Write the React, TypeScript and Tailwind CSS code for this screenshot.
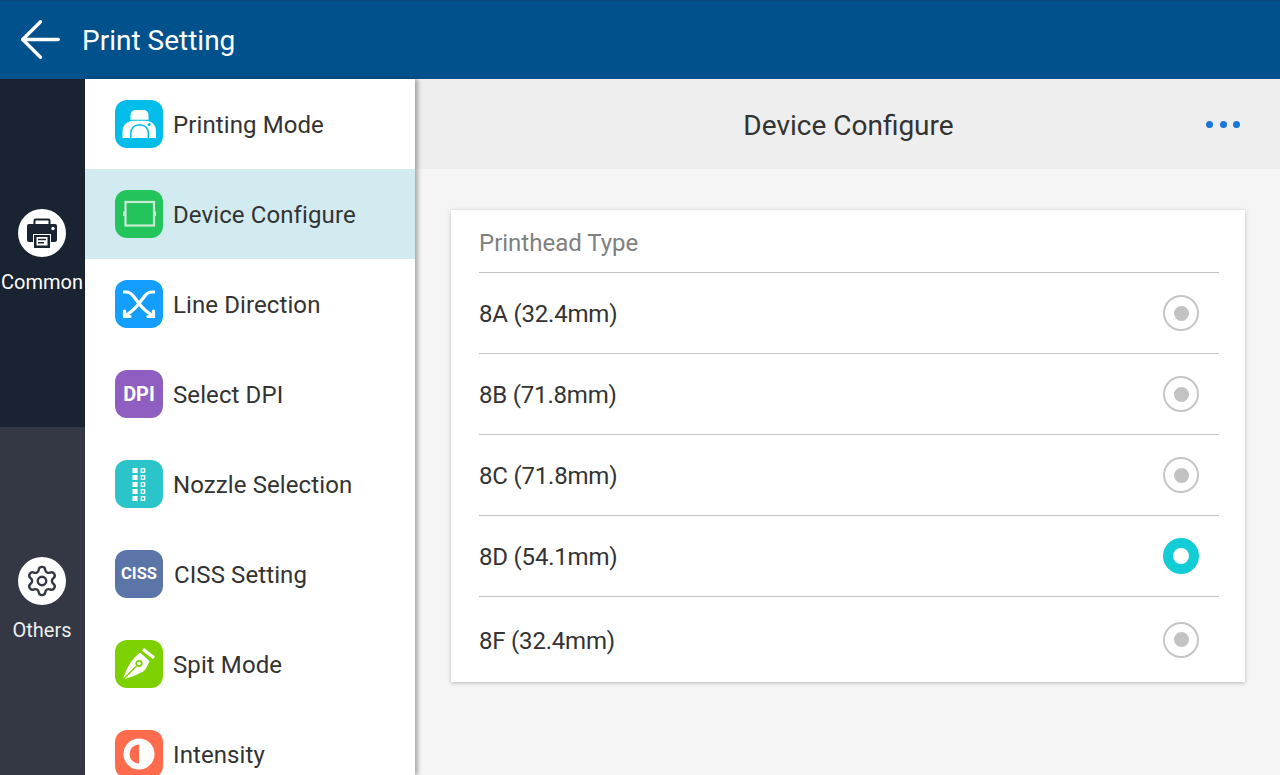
import { ArrowLeft, Settings } from "lucide-react";
import type { ReactNode } from "react";

function IconBox({ bg, children }: { bg: string; children: ReactNode }) {
  return (
    <div className={`flex h-12 w-12 shrink-0 items-center justify-center overflow-hidden rounded-xl ${bg}`}>
      {children}
    </div>
  );
}

function ModeIcon() {
  return (
    <svg width="48" height="48" viewBox="0 0 48 48" fill="none">
      <path d="M15.500 19.800v-4.800a5 5 0 0 1 5-5h8a5 5 0 0 1 5 5v4.800z" fill="#fff" />
      <path d="M7.500 38v-7c0-6 5.500-10.200 11-10.200h12c6 0 10.500 4.200 10.500 10.200v7z" fill="#fff" />
      <path d="M15.800 38v-5c0-4.500 3.500-8 7.500-8h2.500c4.200 0 7.500 3.500 7.500 8v5" stroke="#02bdea" strokeWidth="1.500" />
      <circle cx="34.200" cy="24.500" r="1.500" fill="#02bdea" />
    </svg>
  );
}

function ConfigureIcon() {
  return (
    <svg width="48" height="48" viewBox="0 0 48 48" fill="none">
      <rect x="10.500" y="12" width="28.500" height="23.500" stroke="#c8ecd6" strokeWidth="2.200" />
      <rect x="8" y="21.500" width="2" height="4.500" fill="#c8ecd6" />
      <rect x="39" y="21.500" width="2" height="4.500" fill="#c8ecd6" />
    </svg>
  );
}

function LineIcon() {
  return (
    <svg width="48" height="48" viewBox="0 0 48 48" fill="none" stroke="#fff" strokeWidth="3.200">
      <path d="M8 12h3c4 0 6 2 8 5l5 6.500c3 4 6 7.500 13.500 12" />
      <path d="M40 12h-3c-4 0-6 2-8 5l-5 6.500c-3 4-6 7.500-13.500 12" />
      <path d="M9.500 31v5.500h5.500" strokeLinecap="round" />
      <path d="M38.500 31v5.500H33" strokeLinecap="round" />
    </svg>
  );
}

function NozzleIcon() {
  const rows = [8, 15, 22, 29, 36];
  return (
    <svg width="48" height="48" viewBox="0 0 48 48" fill="none">
      {rows.map((y) => (
        <g key={y}>
          <rect x="17.500" y={y} width="5" height="5" fill="#fff" />
          <rect x="26.300" y={y + 0.800} width="3.400" height="3.400" stroke="#fff" strokeWidth="1.300" />
        </g>
      ))}
    </svg>
  );
}

function SpitIcon() {
  return (
    <svg width="48" height="48" viewBox="0 0 48 48" fill="none">
      <path d="M29 8l11 8.500-2 2.600-11-8.500z" fill="#fff" />
      <path d="M25 12.500L34.500 21C33 25 31 29 29 31 22 35 14 38 8 39.500 10 33 13 26 16 22 18 19 22 15 25 12.500z" fill="#fff" />
      <circle cx="24" cy="23.500" r="3.600" fill="#7ed100" />
      <circle cx="24" cy="23.500" r="1.800" fill="#fff" />
      <path d="M21.500 26L8 39.500" stroke="#7ed100" strokeWidth="1.500" />
    </svg>
  );
}

function IntensityIcon() {
  return (
    <svg width="48" height="48" viewBox="0 0 48 48" fill="none">
      <circle cx="24" cy="24" r="15.500" fill="#fff" />
      <path d="M24 14.500v19a9.500 9.500 0 0 1 0-19z" fill="#ff6b4d" />
    </svg>
  );
}

const menu = [
  { label: "Printing Mode", bg: "bg-[#02bdea]", icon: <ModeIcon /> },
  { label: "Device Configure", bg: "bg-[#23c45b]", icon: <ConfigureIcon />, active: true },
  { label: "Line Direction", bg: "bg-[#149eff]", icon: <LineIcon /> },
  {
    label: "Select DPI",
    bg: "bg-[#8e5fc0]",
    icon: <span className="text-[20px] font-bold text-white">DPI</span>,
  },
  { label: "Nozzle Selection", bg: "bg-[#2cc4cb]", icon: <NozzleIcon /> },
  {
    label: "CISS Setting",
    bg: "bg-[#5b75a8]",
    icon: <span className="text-[16.500px] font-bold text-white">CISS</span>,
    nudge: true,
  },
  { label: "Spit Mode", bg: "bg-[#7ed100]", icon: <SpitIcon /> },
  { label: "Intensity", bg: "bg-[#ff6b4d]", icon: <IntensityIcon /> },
];

const heads = [
  { label: "8A (32.4mm)" },
  { label: "8B (71.8mm)" },
  { label: "8C (71.8mm)" },
  { label: "8D (54.1mm)", selected: true },
  { label: "8F (32.4mm)", last: true },
];

function Radio({ selected }: { selected?: boolean }) {
  if (selected) {
    return (
      <div className="flex h-9 w-9 items-center justify-center rounded-full bg-[#12ccd6]">
        <div className="h-4 w-4 rounded-full bg-white" />
      </div>
    );
  }
  return (
    <div className="flex h-9 w-9 items-center justify-center rounded-full border-2 border-[#c6c6c6]">
      <div className="h-[15px] w-[15px] rounded-full bg-[#c2c2c2]" />
    </div>
  );
}

function PrinterGlyph() {
  return (
    <svg width="32" height="32" viewBox="0 0 32 32" fill="none">
      <path d="M8.500 8V3.500a1 1 0 0 1 1-1h13a1 1 0 0 1 1 1V8" stroke="#1a2331" strokeWidth="2" />
      <path d="M3 7h26a2 2 0 0 1 2 2v14a2 2 0 0 1-2 2h-4v-8H7v8H3a2 2 0 0 1-2-2V9a2 2 0 0 1 2-2z" fill="#1a2331" />
      <circle cx="27" cy="11.500" r="1.700" fill="#fff" />
      <rect x="8" y="18" width="16" height="13" fill="#1a2331" />
      <rect x="10.500" y="20" width="11" height="8.500" fill="#fff" />
      <path d="M12 22.500h8M12 25.800h6" stroke="#1a2331" strokeWidth="1.500" />
    </svg>
  );
}

export default function App() {
  return (
    <div className="flex h-[775px] w-[1280px] flex-col overflow-hidden bg-[#f5f5f5] font-['Roboto',sans-serif]">
      <header className="flex h-[79px] shrink-0 items-center bg-[#01528c] text-white shadow-[inset_0_1px_0_#0b4a7a]">
        <ArrowLeft className="ml-[10px] h-[61px] w-[61px]" strokeWidth={1.300} />
        <h1 className="ml-[11px] pt-[2px] text-[28px] font-normal">Print Setting</h1>
      </header>

      <div className="flex min-h-0 flex-1">
        <nav className="flex w-[85px] shrink-0 flex-col text-white">
          <div className="flex h-[348px] flex-col items-center bg-[#1a2331] pt-[130px] pr-px">
            <div className="flex h-12 w-12 items-center justify-center rounded-full bg-white">
              <PrinterGlyph />
            </div>
            <span className="mt-[13px] text-[20px] leading-[24px] whitespace-nowrap">Common</span>
          </div>
          <div className="flex h-[348px] flex-col items-center bg-[#333844] pt-[130px] pr-px">
            <div className="flex h-12 w-12 items-center justify-center rounded-full bg-white">
              <Settings className="h-[34px] w-[34px] text-[#333844]" strokeWidth={1.700} />
            </div>
            <span className="mt-[13px] text-[20px] leading-[24px] text-[#eceef0]">Others</span>
          </div>
        </nav>

        <aside className="z-10 w-[330px] shrink-0 overflow-hidden bg-white shadow-[3px_0_4px_rgba(0,0,0,0.3)]">
          {menu.map((item) => (
            <div
              key={item.label}
              className={`flex h-[90px] items-center gap-[10px] pl-[30px] ${item.active ? "bg-[#d2ebf0]" : ""}`}
            >
              <IconBox bg={item.bg}>{item.icon}</IconBox>
              <span className={`pt-[2px] text-[24px] tracking-[0.1px] text-[#333333] ${item.nudge ? "ml-px" : ""}`}>
                {item.label}
              </span>
            </div>
          ))}
        </aside>

        <main className="flex-1">
          <div className="relative flex h-[90px] items-center justify-center bg-[#eeeeee] pl-[2px]">
            <h2 className="pt-[4px] text-[28px] font-normal text-[#333333]">Device Configure</h2>
            <div className="absolute right-[40px] mt-px flex gap-[6.500px]">
              <span className="h-[7px] w-[7px] rounded-full bg-[#1a75d8]" />
              <span className="h-[7px] w-[7px] rounded-full bg-[#1a75d8]" />
              <span className="h-[7px] w-[7px] rounded-full bg-[#1a75d8]" />
            </div>
          </div>

          <section className="mt-[41px] ml-[36px] w-[794px] bg-white pr-[26px] pl-[28px] shadow-[0_1px_4px_rgba(0,0,0,0.25)]">
            <div className="flex h-[63px] items-center border-b border-[#c4c4c4] pt-[4px] text-[24px] text-[#808080]">
              Printhead Type
            </div>
            {heads.map((h) => (
              <div
                key={h.label}
                className={`flex items-center justify-between pr-[20px] text-[24px] text-[#333333] ${
                  h.last ? "h-[85px]" : "h-[81px] border-b border-[#c4c4c4]"
                }`}
              >
                <span className="pt-[2px] tracking-[-0.2px]">{h.label}</span>
                <Radio selected={h.selected} />
              </div>
            ))}
          </section>
        </main>
      </div>
    </div>
  );
}
